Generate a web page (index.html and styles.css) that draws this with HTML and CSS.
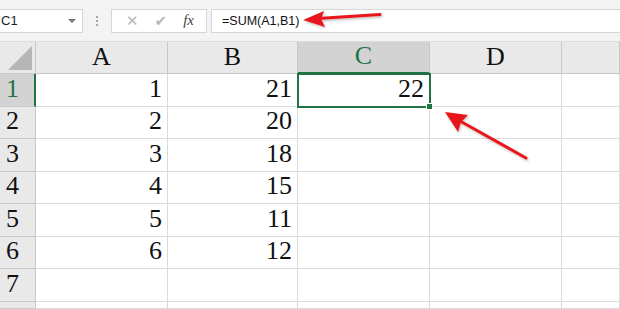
FILE: index.html
```html
<!DOCTYPE html>
<html lang="zh-CN">
<head>
  <meta charset="UTF-8">
  <title>SUM</title>
  <link rel="stylesheet" href="styles.css">
</head>
<body>
  <div class="toolbar">
    <div class="name-box">
      <span>C1</span>
      <span class="drop"></span>
    </div>
    <div class="grip"><i></i><i></i><i></i></div>
    <div class="fx-box">
      <span class="btn">&#x2715;</span>
      <span class="btn">&#x2714;</span>
      <span class="fx">fx</span>
    </div>
    <div class="formula">=SUM(A1,B1)</div>
  </div>

  <div class="sheet">
    <div class="hd corner"><span class="tri"></span></div>
    <div class="hd col">A</div>
    <div class="hd col">B</div>
    <div class="hd col active">C</div>
    <div class="hd col">D</div>
    <div class="hd col"></div>

    <div class="hd row active">1</div>
    <div class="cell">1</div><div class="cell">21</div><div class="cell sel">22</div><div class="cell"></div><div class="cell"></div>
    <div class="hd row">2</div>
    <div class="cell">2</div><div class="cell">20</div><div class="cell"></div><div class="cell"></div><div class="cell"></div>
    <div class="hd row">3</div>
    <div class="cell">3</div><div class="cell">18</div><div class="cell"></div><div class="cell"></div><div class="cell"></div>
    <div class="hd row">4</div>
    <div class="cell">4</div><div class="cell">15</div><div class="cell"></div><div class="cell"></div><div class="cell"></div>
    <div class="hd row">5</div>
    <div class="cell">5</div><div class="cell">11</div><div class="cell"></div><div class="cell"></div><div class="cell"></div>
    <div class="hd row">6</div>
    <div class="cell">6</div><div class="cell">12</div><div class="cell"></div><div class="cell"></div><div class="cell"></div>
    <div class="hd row">7</div>
    <div class="cell"></div><div class="cell"></div><div class="cell"></div><div class="cell"></div><div class="cell"></div>
    <div class="hd row"></div>
    <div class="cell"></div><div class="cell"></div><div class="cell"></div><div class="cell"></div><div class="cell"></div>
  </div>

  <svg class="arrows" width="620" height="309" viewBox="0 0 620 309">
    <defs>
      <filter id="sh" x="-20%" y="-20%" width="140%" height="140%">
        <feDropShadow dx="1" dy="1.5" stdDeviation="1.2" flood-color="#000" flood-opacity="0.25"/>
      </filter>
    </defs>
    <g fill="#e8191b" stroke="#e8191b" filter="url(#sh)">
      <line x1="380" y1="14.5" x2="318" y2="18.5" stroke-width="3" stroke-linecap="round"/>
      <polygon points="303,20 324,11 321,19 325,27" stroke="none"/>
      <line x1="526" y1="158" x2="460" y2="121" stroke-width="3" stroke-linecap="round"/>
      <polygon points="445,112 468,115 461,122 458,132" stroke="none"/>
    </g>
  </svg>
</body>
</html>
```
FILE: styles.css
```css
/* base */
body {
  margin: 0;
  width: 620px;
  height: 309px;
  overflow: hidden;
  background: #ffffff;
  font-family: "Liberation Serif", "Times New Roman", serif;
  position: relative;
}

/* formula toolbar */
.toolbar {
  display: flex;
  align-items: center;
  height: 42px;
  box-sizing: border-box;
  background: #f3f3f3;
  border-bottom: 1px solid #dcdcdc;
}
.name-box {
  width: 83px;
  height: 24px;
  box-sizing: border-box;
  background: #fff;
  border: 1px solid #d6d6d6;
  border-left: none;
  display: flex;
  align-items: center;
  justify-content: space-between;
  padding: 0 6px 0 1px;
  font-family: "Liberation Sans", Arial, sans-serif;
  font-size: 13px;
  color: #222;
}
.drop {
  width: 0;
  height: 0;
  border-left: 4px solid transparent;
  border-right: 4px solid transparent;
  border-top: 4px solid #777;
}
.grip {
  width: 28px;
  display: flex;
  flex-direction: column;
  align-items: center;
  gap: 2px;
}
.grip i {
  width: 2px;
  height: 2px;
  background: #a8a8a8;
}
.fx-box {
  width: 96px;
  height: 24px;
  box-sizing: border-box;
  background: #fff;
  border: 1px solid #d6d6d6;
  display: flex;
  align-items: center;
  justify-content: space-around;
  padding: 0 4px 0 6px;
}
.btn {
  font-family: "DejaVu Sans", sans-serif;
  font-size: 15px;
  color: #b8b8b8;
}
.fx {
  font-family: "Liberation Serif", serif;
  font-style: italic;
  font-size: 15px;
  color: #444;
}
.formula {
  flex: 1;
  height: 24px;
  margin-left: 4px;
  box-sizing: border-box;
  background: #fff;
  border: 1px solid #d6d6d6;
  border-right: none;
  padding-left: 10px;
  display: flex;
  align-items: center;
  font-family: "Liberation Sans", Arial, sans-serif;
  font-size: 12.5px;
  color: #111;
}

/* grid */
.sheet {
  display: grid;
  grid-template-columns: 36px 132px 130px 132px 132px 1fr;
  grid-template-rows: 32px repeat(7, 32.5px) 7px;
  overflow: hidden;
}
.hd {
  background: #e9e9e9;
  border-right: 1px solid #c8c8c8;
  border-bottom: 1px solid #c8c8c8;
  box-sizing: border-box;
  font-size: 26px;
  color: #111;
  line-height: 1;
}
.col {
  display: flex;
  align-items: flex-end;
  justify-content: center;
  padding-bottom: 3px;
}
.row {
  display: flex;
  align-items: flex-end;
  padding: 0 0 4px 6px;
}
.hd.active {
  background: #d3d3d3;
  color: #217346;
}
.col.active {
  border-bottom: 2px solid #217346;
}
.row.active {
  border-right: 2px solid #217346;
}
.corner {
  position: relative;
}
.tri {
  position: absolute;
  right: 3px;
  bottom: 3px;
  width: 0;
  height: 0;
  border-left: 24px solid transparent;
  border-bottom: 24px solid #b6b6b6;
}
.cell {
  border-right: 1px solid #dadada;
  border-bottom: 1px solid #dadada;
  box-sizing: border-box;
  display: flex;
  align-items: flex-end;
  justify-content: flex-end;
  padding: 0 5px 4px 0;
  font-size: 26px;
  line-height: 1;
  color: #111;
}
.cell.sel {
  position: relative;
  outline: 2px solid #217346;
  outline-offset: -1px;
}
.cell.sel::after {
  content: "";
  position: absolute;
  right: -4px;
  bottom: -4px;
  width: 5px;
  height: 5px;
  background: #217346;
  border: 1px solid #fff;
}

/* red annotation arrows */
.arrows {
  position: absolute;
  top: 0;
  left: 0;
  pointer-events: none;
}
```
